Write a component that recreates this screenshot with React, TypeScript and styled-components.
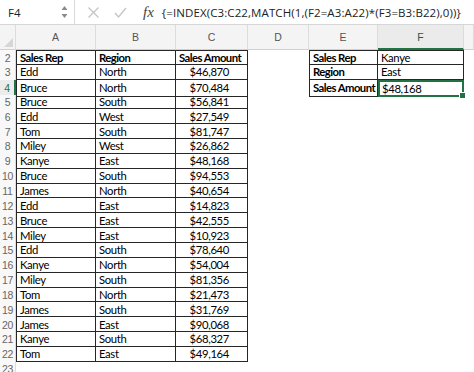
import React from "react";
import styled, { createGlobalStyle, css } from "styled-components";

const COLS = "16px 80px 80px 72px 61px 69px 86px 1fr";
const ROW_H = 14.85;
const GREEN = "#217346";

type Align = "left" | "right" | "center";

interface CellDef {
  text?: string;
  bold?: boolean;
  align?: Align;
  boxed?: boolean;
  first?: boolean;
  top?: boolean;
  selected?: boolean;
}

const sales: [string, string, string][] = [
  ["Edd", "North", "$46,870"],
  ["Bruce", "North", "$70,484"],
  ["Bruce", "South", "$56,841"],
  ["Edd", "West", "$27,549"],
  ["Tom", "South", "$81,747"],
  ["Miley", "West", "$26,862"],
  ["Kanye", "East", "$48,168"],
  ["Bruce", "South", "$94,553"],
  ["James", "North", "$40,654"],
  ["Edd", "East", "$14,823"],
  ["Bruce", "East", "$42,555"],
  ["Miley", "East", "$10,923"],
  ["Edd", "South", "$78,640"],
  ["Kanye", "North", "$54,004"],
  ["Miley", "South", "$81,356"],
  ["Tom", "North", "$21,473"],
  ["James", "South", "$31,769"],
  ["James", "East", "$90,068"],
  ["Kanye", "South", "$68,327"],
  ["Tom", "East", "$49,164"],
];

const lookup: [string, string][] = [
  ["Sales Rep", "Kanye"],
  ["Region", "East"],
  ["Sales Amount", "$48,168"],
];

const GlobalStyle = createGlobalStyle`
  html, body {
    margin: 0;
    padding: 0;
    background: #fff;
    overflow: hidden;
  }
  body {
    font-family: Lato, "Liberation Sans", sans-serif;
    color: #000;
  }
`;

const Sheet = styled.div`
  width: 474px;
  height: 372px;
  overflow: hidden;
  background: #fff;
`;

const FormulaBar = styled.div`
  display: flex;
  align-items: center;
  height: 24px;
  border-bottom: 1px solid #d6d6d6;
  font-family: "Open Sans", "Liberation Sans", sans-serif;
  font-size: 11.5px;
  color: #222;
`;

const NameBox = styled.div`
  display: flex;
  align-items: center;
  justify-content: space-between;
  width: 75px;
  height: 100%;
  box-sizing: border-box;
  padding: 0 6px 0 8px;
  border-right: 1px solid #d9d9d9;
`;

const Stepper = styled.svg`
  width: 7px;
  height: 14px;
`;

const Actions = styled.div`
  display: flex;
  align-items: center;
  gap: 14px;
  padding: 0 8px 0 12px;
`;

const ActionIcon = styled.svg`
  width: 13px;
  height: 13px;
  stroke: #c4c4c4;
  stroke-width: 1.3;
  fill: none;
`;

const Fx = styled.span`
  font-family: "Liberation Serif", "DejaVu Serif", serif;
  font-style: italic;
  font-size: 15px;
  color: #444;
  margin-left: 2px;
`;

const Formula = styled.span`
  letter-spacing: 0.1px;
  white-space: nowrap;
`;

const Row = styled.div<{ $h?: number }>`
  display: grid;
  grid-template-columns: ${COLS};
  height: ${(p) => p.$h ?? ROW_H}px;
`;

const ColHeader = styled.div<{ $active?: boolean }>`
  display: flex;
  align-items: center;
  justify-content: center;
  background: #f4f4f4;
  border-right: 1px solid #dcdcdc;
  border-bottom: 1px solid #d0d0d0;
  font-family: "Liberation Sans", sans-serif;
  font-size: 10.5px;
  color: #555;
  ${(p) =>
    p.$active &&
    css`
      background: #ebebeb;
      border-bottom: 2px solid ${GREEN};
      color: #2c5a3e;
    `}
`;

const Corner = styled.div`
  position: relative;
  background: #f4f4f4;
  border-right: 1px solid #dcdcdc;
  border-bottom: 1px solid #d0d0d0;
  &::after {
    content: "";
    position: absolute;
    right: 2px;
    bottom: 2px;
    border-left: 9px solid transparent;
    border-bottom: 9px solid #d6d6d6;
  }
`;

const RowHeader = styled.div<{ $active?: boolean }>`
  display: flex;
  align-items: center;
  justify-content: center;
  box-sizing: border-box;
  background: #f8f8f8;
  border-right: 1px solid #dcdcdc;
  font-family: "Liberation Sans", sans-serif;
  font-size: 10.5px;
  letter-spacing: -0.3px;
  color: #666;
  ${(p) =>
    p.$active &&
    css`
      color: ${GREEN};
      border-right: 2px solid ${GREEN};
      background: #ececec;
    `}
`;

const Cell = styled.div<{
  $bold?: boolean;
  $align?: Align;
  $boxed?: boolean;
  $first?: boolean;
  $top?: boolean;
  $selected?: boolean;
}>`
  position: relative;
  display: flex;
  align-items: center;
  box-sizing: border-box;
  min-width: 0;
  padding: 0 3px;
  font-size: 11.3px;
  letter-spacing: ${(p) => (p.$bold ? "-0.55px" : "-0.35px")};
  font-weight: ${(p) => (p.$bold ? 700 : 400)};
  white-space: nowrap;
  overflow: visible;
  justify-content: ${(p) =>
    p.$align === "right" ? "flex-end" : p.$align === "center" ? "center" : "flex-start"};
  ${(p) =>
    p.$align === "right" &&
    css`
      padding-right: 18px;
    `}
  ${(p) =>
    p.$boxed &&
    css`
      border-right: 1px solid #262626;
      border-bottom: 1px solid #262626;
    `}
  ${(p) =>
    p.$boxed &&
    p.$first &&
    css`
      border-left: 1px solid #262626;
    `}
  ${(p) =>
    p.$boxed &&
    p.$top &&
    css`
      border-top: 1px solid #262626;
    `}
  ${(p) =>
    p.$selected &&
    css`
      border: 2px solid ${GREEN};
      padding-left: 2px;
      &::after {
        content: "";
        position: absolute;
        right: -4px;
        bottom: -4px;
        width: 5px;
        height: 5px;
        background: ${GREEN};
        border: 1px solid #fff;
      }
    `}
`;

const blank = (): CellDef => ({});

const dataRow = (r: number): CellDef[] => {
  const top = r === 2;
  if (r >= 2 && r <= 22) {
    const vals = top ? ["Sales Rep", "Region", "Sales Amount"] : sales[r - 3];
    return [
      { text: vals[0], bold: top, boxed: true, first: true, top },
      { text: vals[1], bold: top, boxed: true, top },
      { text: vals[2], bold: top, boxed: true, top, align: top ? "left" : "right" },
    ];
  }
  return [blank(), blank(), blank()];
};

const lookupRow = (r: number): CellDef[] => {
  if (r >= 2 && r <= 4) {
    const [label, value] = lookup[r - 2];
    const top = r === 2;
    return [
      { text: label, bold: true, boxed: true, first: true, top },
      { text: value, boxed: true, top, selected: r === 4 },
    ];
  }
  return [blank(), blank()];
};

const renderCell = (c: CellDef, key: number) => (
  <Cell
    key={key}
    $bold={c.bold}
    $align={c.align}
    $boxed={c.boxed}
    $first={c.first}
    $top={c.top}
    $selected={c.selected}
  >
    {c.text}
  </Cell>
);

const rows = Array.from({ length: 22 }, (_, i) => i + 2);

const App: React.FC = () => {
  return (
    <Sheet>
      <GlobalStyle />
      <FormulaBar>
        <NameBox>
          <span>F4</span>
          <Stepper viewBox="0 0 7 14">
            <path d="M3.5 1 L6.5 5 L0.5 5 Z" fill="#8a8a8a" />
            <path d="M3.5 13 L6.5 9 L0.5 9 Z" fill="#8a8a8a" />
          </Stepper>
        </NameBox>
        <Actions>
          <ActionIcon viewBox="0 0 13 13">
            <path d="M1.5 1.5 L11.5 11.5 M11.5 1.5 L1.5 11.5" />
          </ActionIcon>
          <ActionIcon viewBox="0 0 13 13">
            <path d="M1 7 L4.5 11 L12 2" />
          </ActionIcon>
          <Fx>fx</Fx>
        </Actions>
        <Formula>{"{=INDEX(C3:C22,MATCH(1,(F2=A3:A22)*(F3=B3:B22),0))}"}</Formula>
      </FormulaBar>

      <Row $h={25}>
        <Corner />
        {["A", "B", "C", "D", "E", "F", ""].map((l) => (
          <ColHeader key={l || "g"} $active={l === "F"}>
            {l}
          </ColHeader>
        ))}
      </Row>

      {rows.map((r) => (
        <Row key={r}>
          <RowHeader $active={r === 4}>{r}</RowHeader>
          {dataRow(r).map(renderCell)}
          {renderCell(blank(), 3)}
          {lookupRow(r).map((c, i) => renderCell(c, 4 + i))}
          {renderCell(blank(), 6)}
        </Row>
      ))}
    </Sheet>
  );
};

export default App;
